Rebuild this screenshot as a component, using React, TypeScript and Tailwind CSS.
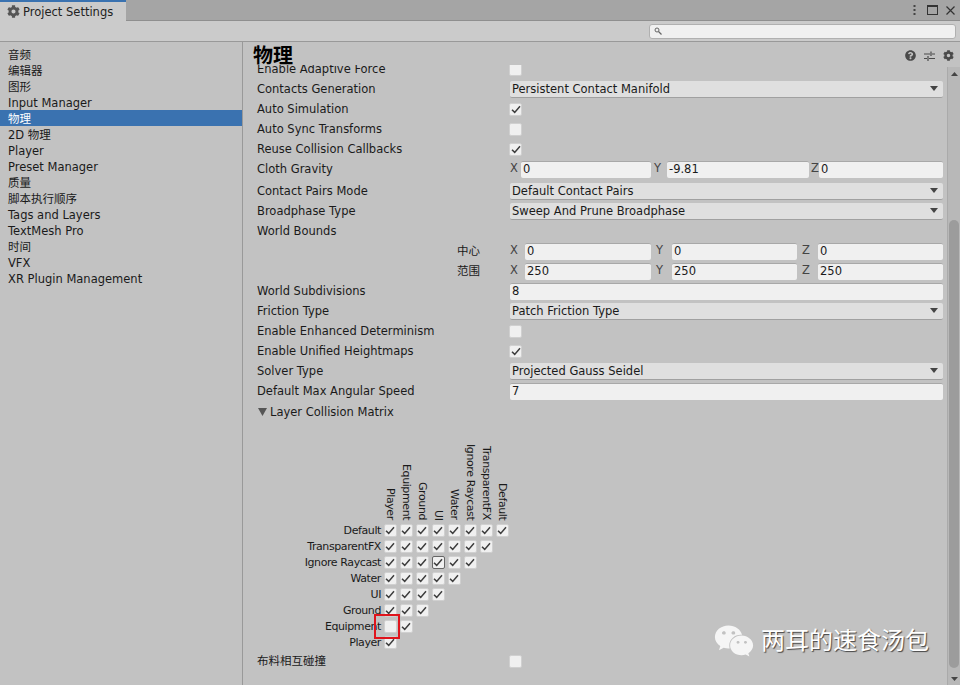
import React from "react";
import { FaCog, FaQuestionCircle, FaWeixin } from "react-icons/fa";

const menu = [
  "音频",
  "编辑器",
  "图形",
  "Input Manager",
  "物理",
  "2D 物理",
  "Player",
  "Preset Manager",
  "质量",
  "脚本执行顺序",
  "Tags and Layers",
  "TextMesh Pro",
  "时间",
  "VFX",
  "XR Plugin Management",
];

const layers = ["Default", "TransparentFX", "Ignore Raycast", "Water", "UI", "Ground", "Equipment", "Player"];
const columns = [...layers].reverse();

const Check = () => (
  <svg width="10" height="9" viewBox="0 0 10 9" fill="none">
    <path d="M1 4.8 L3.7 7.4 L9 1.2" stroke="#3c3c3c" strokeWidth="1.5" />
  </svg>
);

const Checkbox = ({ checked = true, focus = false }: { checked?: boolean; focus?: boolean }) => (
  <div
    className={`flex h-[13px] w-[13px] items-center justify-center rounded-[2px] border bg-[#f0f0f0] ${
      focus ? "border-[#666666]" : "border-[#d0d0d0]"
    }`}
  >
    {checked && <Check />}
  </div>
);

const FieldCheck = ({ checked = true }: { checked?: boolean }) => (
  <div className="-ml-px">
    <Checkbox checked={checked} />
  </div>
);

const Label = ({ text }: { text: string }) => <div className="w-[267px] shrink-0 pl-[14px] pt-px">{text}</div>;

const Row = ({ children }: { children: React.ReactNode }) => <div className="flex h-5 items-center">{children}</div>;

const Select = ({ value }: { value: string }) => (
  <div className="flex h-[17px] w-[433px] items-center justify-between rounded-[2px] border-b border-[#a0a0a0] bg-[#dfdfdf] pl-[2px] pr-[5px]">
    <span className="pt-[2px]">{value}</span>
    <svg width="8" height="5" viewBox="0 0 8 5">
      <polygon points="0,0 8,0 4,5" fill="#444444" />
    </svg>
  </div>
);

const Input = ({ value, w }: { value: string; w: string }) => (
  <div className={`flex h-[17px] items-center rounded-[2px] border-t border-[#a8a8a8] bg-[#f0f0f0] pl-[2px] pt-px ${w}`}>{value}</div>
);

const Axis = ({ name }: { name: string }) => <span className="text-[#444444]">{name}</span>;

const GravityField = () => (
  <div className="flex items-center">
    <div className="flex w-[144px] items-center justify-between pr-[3px]">
      <Axis name="X" />
      <Input value="0" w="w-[130px]" />
    </div>
    <div className="flex w-[155px] items-center justify-between">
      <Axis name="Y" />
      <Input value="-9.81" w="w-[142px]" />
    </div>
    <div className="ml-[2px] flex w-[132px] items-center justify-between">
      <Axis name="Z" />
      <Input value="0" w="w-[130px]" />
    </div>
  </div>
);

const BoundsField = ({ title, value }: { title: string; value: string }) => (
  <Row>
    <div className="w-[267px] shrink-0 pl-[214px] pt-px">{title}</div>
    <div className="flex w-[141px] items-center justify-between">
      <Axis name="X" />
      <Input value={value} w="w-[126px]" />
    </div>
    <div className="ml-[5px] flex w-[141px] items-center justify-between">
      <Axis name="Y" />
      <Input value={value} w="w-[125px]" />
    </div>
    <div className="ml-[5px] flex w-[141px] items-center justify-between">
      <Axis name="Z" />
      <Input value={value} w="w-[125px]" />
    </div>
  </Row>
);

const Matrix = () => (
  <div className="h-[228px]">
    <div className="flex h-[97px] items-end pl-[139px]">
      {columns.map((c) => (
        <div key={c} className="flex w-4 justify-center">
          <span className="text-[11px] leading-4 tracking-[-0.4px] [writing-mode:vertical-rl]">{c}</span>
        </div>
      ))}
    </div>
    <div className="mt-[2px]">
      {layers.map((l, i) => (
        <div key={l} className="flex h-4 items-center">
          <div className="w-[138px] shrink-0 text-right text-[11px] tracking-[-0.4px]">{l}</div>
          <div className="flex pl-px">
            {columns.slice(0, 8 - i).map((c, j) => (
              <div key={c} className="flex w-4 justify-center">
                <Checkbox checked={!(l === "Equipment" && j === 0)} focus={l === "Ignore Raycast" && j === 3} />
              </div>
            ))}
          </div>
        </div>
      ))}
    </div>
  </div>
);

export default function App() {
  return (
    <div className="relative flex h-[685px] w-[960px] flex-col overflow-hidden bg-[#c2c2c2] font-['DejaVu_Sans','Noto_Sans_CJK_SC',sans-serif] text-[11.5px] leading-none text-[#1a1a1a]">
      <div className="flex h-[21px] shrink-0 items-stretch justify-between border-b border-[#8f8f8f] bg-[#a5a5a5]">
        <div className="flex h-[21px] w-[126px] items-center gap-[3px] border-t-2 border-[#3a72b0] bg-[#cbcbcb] pl-[7px] text-[#222222]">
          <FaCog size={13} className="text-[#555555]" />
          <span className="pt-[2px]">Project Settings</span>
        </div>
        <div className="flex items-center gap-[8px] pr-[5px]">
          <svg width="3" height="11" viewBox="0 0 3 11" className="mr-[3px]">
            <rect x="0.5" y="0" width="2" height="2" fill="#444444" />
            <rect x="0.5" y="4" width="2" height="2" fill="#444444" />
            <rect x="0.5" y="8" width="2" height="2" fill="#444444" />
          </svg>
          <svg width="11" height="10" viewBox="0 0 11 10" fill="none">
            <rect x="0.5" y="0.5" width="10" height="9" stroke="#333333" />
            <rect x="0" y="0" width="11" height="2" fill="#333333" />
          </svg>
          <svg width="9" height="9" viewBox="0 0 9 9" fill="none">
            <path d="M0.5 0.5 L8.5 8.5 M8.5 0.5 L0.5 8.5" stroke="#333333" strokeWidth="1.2" />
          </svg>
        </div>
      </div>

      <div className="flex h-[21px] shrink-0 items-center justify-end border-b border-[#999999] bg-[#cbcbcb] pr-[4px]">
        <div className="flex h-[15px] w-[307px] items-center rounded-[3px] border border-[#b0b0b0] bg-[#f0f0f0] pl-[4px]">
          <svg width="8" height="8" viewBox="0 0 8 8" fill="none">
            <circle cx="3" cy="3" r="2" stroke="#666666" />
            <path d="M4.5 4.5 L7.5 7.5" stroke="#666666" strokeWidth="1.2" />
          </svg>
        </div>
      </div>

      <div className="flex min-h-0 flex-1">
        <div className="w-[242px] shrink-0 pt-[4px]">
          {menu.map((m) => (
            <div
              key={m}
              className={`flex h-4 items-center pl-[8px] pt-[3px] ${m === "物理" ? "bg-[#3a72b0] text-white" : ""}`}
            >
              {m}
            </div>
          ))}
        </div>
        <div className="w-px bg-[#999999]" />

        <div className="relative flex min-w-0 flex-1 flex-col">
          <div className="flex h-[23px] shrink-0 items-center justify-between pl-[10px] pr-[6px] pt-[4px]">
            <span className="relative z-10 text-[20px] font-bold text-black">物理</span>
            <div className="flex items-center gap-[8px] text-[#4a4a4a]">
              <FaQuestionCircle size={11} />
              <svg width="11" height="10" viewBox="0 0 11 10" fill="none" stroke="#4a4a4a" strokeWidth="1.2">
                <path d="M0 3 H6 M8 3 H11 M7 0.5 V5 M0 7.5 H3 M5 7.5 H11 M4 5 V10" />
              </svg>
              <FaCog size={11} />
            </div>
          </div>

          <div className="flex min-h-0 flex-1">
            <div className="min-w-0 flex-1 overflow-hidden">
              <div className="-mt-[6px]">
                <Row><Label text="Enable Adaptive Force" /><FieldCheck checked={false} /></Row>
                <Row><Label text="Contacts Generation" /><Select value="Persistent Contact Manifold" /></Row>
                <Row><Label text="Auto Simulation" /><FieldCheck /></Row>
                <Row><Label text="Auto Sync Transforms" /><FieldCheck checked={false} /></Row>
                <Row><Label text="Reuse Collision Callbacks" /><FieldCheck /></Row>
                <Row><Label text="Cloth Gravity" /><GravityField /></Row>
                <div className="h-[2px]" />
                <Row><Label text="Contact Pairs Mode" /><Select value="Default Contact Pairs" /></Row>
                <Row><Label text="Broadphase Type" /><Select value="Sweep And Prune Broadphase" /></Row>
                <Row><Label text="World Bounds" /></Row>
                <BoundsField title="中心" value="0" />
                <BoundsField title="范围" value="250" />
                <Row><Label text="World Subdivisions" /><Input value="8" w="w-[433px]" /></Row>
                <Row><Label text="Friction Type" /><Select value="Patch Friction Type" /></Row>
                <Row><Label text="Enable Enhanced Determinism" /><FieldCheck checked={false} /></Row>
                <Row><Label text="Enable Unified Heightmaps" /><FieldCheck /></Row>
                <Row><Label text="Solver Type" /><Select value="Projected Gauss Seidel" /></Row>
                <Row><Label text="Default Max Angular Speed" /><Input value="7" w="w-[433px]" /></Row>
                <div className="flex h-[22px] items-center gap-[3px] pl-[15px]">
                  <svg width="9" height="8" viewBox="0 0 9 8">
                    <polygon points="0,0 9,0 4.5,8" fill="#555555" />
                  </svg>
                  <span className="pt-px">Layer Collision Matrix</span>
                </div>
                <Matrix />
                <Row><Label text="布料相互碰撞" /><FieldCheck checked={false} /></Row>
              </div>
            </div>

            <div className="mt-[2px] flex w-[13px] shrink-0 flex-col items-center border-l border-[#aaaaaa] bg-[#b8b8b8] pt-[5px] pb-[4px]">
              <svg width="7" height="4" viewBox="0 0 7 4">
                <polygon points="0,4 7,4 3.5,0" fill="#444444" />
              </svg>
              <div className="mb-[9px] mt-auto h-[448px] w-[10px] rounded-[5px] bg-[#9c9c9c]" />
              <svg width="7" height="4" viewBox="0 0 7 4">
                <polygon points="0,0 7,0 3.5,4" fill="#444444" />
              </svg>
            </div>
          </div>
        </div>
      </div>

      <div className="absolute left-[374px] top-[614px] h-[25px] w-[26px] border-2 border-[#e0141c]" />

      <div className="absolute left-[714px] top-[621px] flex items-center gap-[7px] text-white">
        <FaWeixin size={40} className="text-[#f5f5f5]" />
        <span className="text-[24px] [text-shadow:1px_1px_1px_#444444]">两耳的速食汤包</span>
      </div>
    </div>
  );
}
